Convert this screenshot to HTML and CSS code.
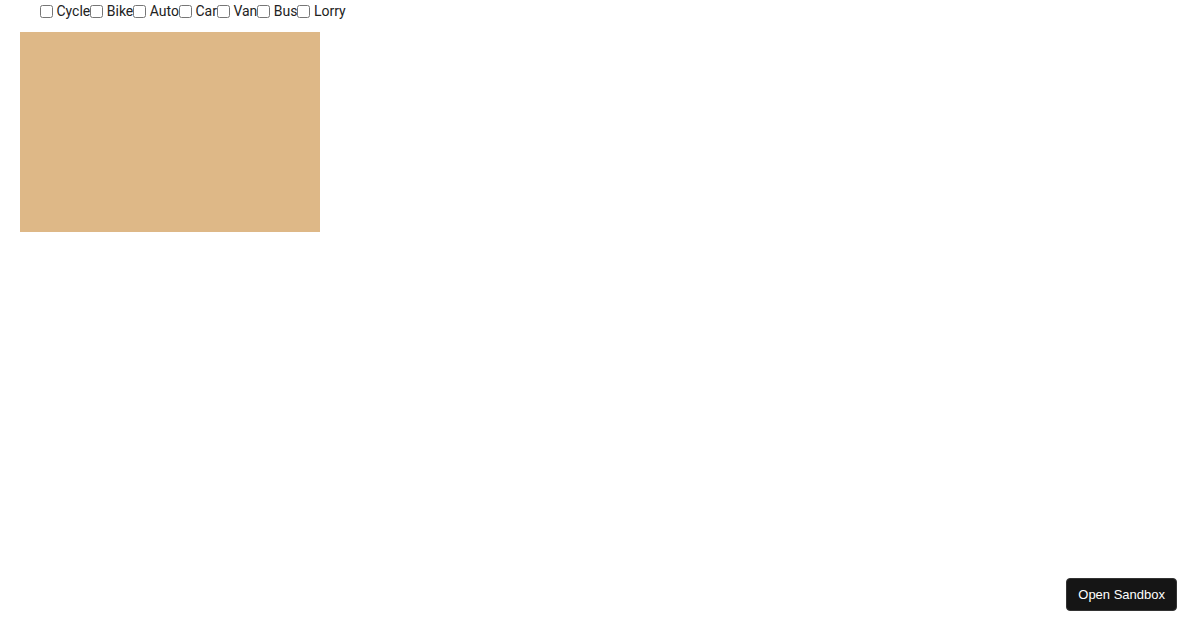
FILE: index.html
```html
<!DOCTYPE html>
<html>
<head>
<meta charset="utf-8">
<link rel="stylesheet" href="styles.css">
</head>
<body>
<div class="app">
  <div class="filters">
    <label class="opt"><input type="checkbox"> Cycle</label><label class="opt"><input type="checkbox"> Bike</label><label class="opt"><input type="checkbox"> Auto</label><label class="opt"><input type="checkbox"> Car</label><label class="opt"><input type="checkbox"> Van</label><label class="opt"><input type="checkbox"> Bus</label><label class="opt"><input type="checkbox"> Lorry</label>
  </div>
  <div class="box"></div>
</div>
<button class="sandbox">Open Sandbox</button>
</body>
</html>
```
FILE: styles.css
```css
html, body {
  margin: 0;
  padding: 0;
  background: #fff;
}
body {
  font-family: Roboto, "Liberation Sans", Arial, sans-serif;
  font-size: 14px;
  color: #222;
}
.app {
  padding: 2px 0 0 20px;
}
.filters {
  padding-left: 20px;
  height: 30px;
  white-space: nowrap;
}
.opt input {
  margin: 3px 0;
  width: 13px;
  height: 13px;
  vertical-align: -2px;
}
.box {
  width: 300px;
  height: 200px;
  background: #deb887;
}
.sandbox {
  position: fixed;
  right: 23px;
  bottom: 19px;
  background: #151515;
  color: #fff;
  border: 1px solid #333;
  border-radius: 4px;
  font-family: "Liberation Sans", Arial, sans-serif;
  font-size: 13px;
  padding: 0 11px;
  height: 33px;
}
```
